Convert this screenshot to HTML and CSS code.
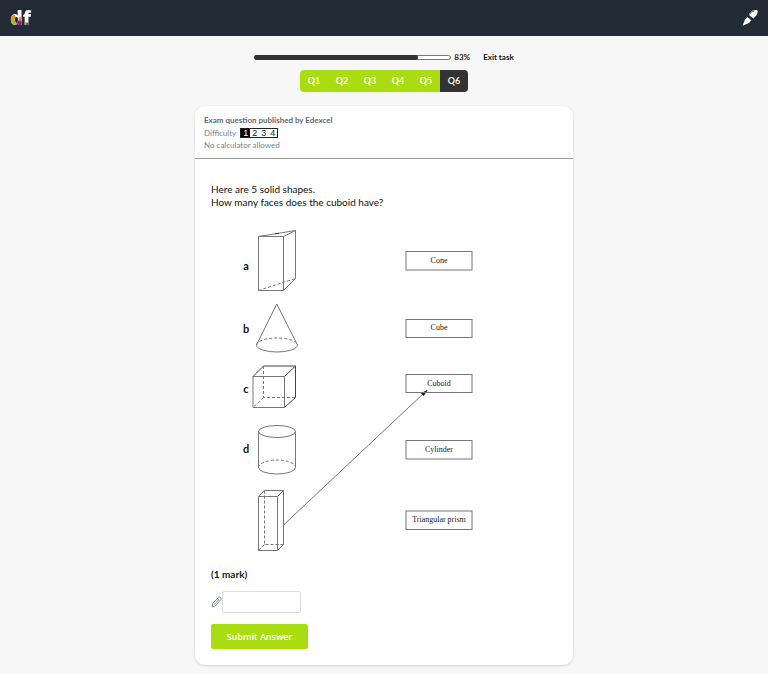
FILE: index.html
```
<!DOCTYPE html>
<html lang="en">

<head>
    <meta charset="UTF-8">
    <meta name="viewport" content="width=device-width, initial-scale=1.0">
    <title>Exam question</title>
    <link rel="stylesheet" href="styles.css">
</head>

<body>
    <header class="topBar">
        <a href="#" class="logo">df</a>
        <button class="penButton" aria-label="Drawing tools">
            <svg viewBox="0 0 16 16" width="16" height="16">
                <path d="M7.500 3.500l3-3 4-.5q1.300.3 1.200 1.500l-.7 3-3.500 4L7 5z" fill="#fff" />
                <path d="M5.500 7L9.200 10.200l-2.200 2.800-6.500 2.800L3 9.500z" fill="#fff" />
                <path d="M7.500 4.500l2.500-3 2.500-.3" fill="none" stroke="#222b36" stroke-width=".7" />
            </svg>
        </button>
    </header>

    <main>
        <div class="progressPart">
            <div class="progressBar" role="progressbar" aria-label="Task progress" aria-valuenow="83" aria-valuemin="0" aria-valuemax="100">
                <div class="progressFill" style="width: 83%"></div>
            </div>
            <span class="percent">83%</span>
            <a href="#" class="exitLink">Exit task</a>
        </div>

        <nav class="questionTabs">
            <button class="tab">Q1</button>
            <button class="tab">Q2</button>
            <button class="tab">Q3</button>
            <button class="tab">Q4</button>
            <button class="tab">Q5</button>
            <button class="tab active">Q6</button>
        </nav>

        <section class="card">
            <div class="cardInfo">
                <p class="publisher">Exam question published by Edexcel</p>
                <p class="difficulty">Difficulty
                    <span class="levels"><span class="level chosen">1</span><span class="level">2</span><span class="level">3</span><span class="level">4</span></span>
                </p>
                <p>No calculator allowed</p>
            </div>

            <form class="cardBody" onsubmit="return false">
                <p class="question">Here are 5 solid shapes.<br>How many faces does the cuboid have?</p>

                <svg class="diagram" viewBox="211 220 346 340">
                    <g class="letters">
                        <text x="246" y="270">a</text>
                        <text x="246" y="333">b</text>
                        <text x="246" y="393">c</text>
                        <text x="246" y="453">d</text>
                    </g>

                    <g class="lines">
                        <!-- triangular prism -->
                        <path d="M258.500 236.500H283.500V290.500H258.500zM258.500 236.500L295.500 230.500L283.500 236.500M295.500 230.500V278.500L283.500 290.500" />
                        <path class="dash" d="M258.500 290.500L295.500 278.500" />
                        <path class="solid" d="M275 233.500l4 0" />
                        <!-- cone -->
                        <path d="M256.500 345L276.800 304L297.500 345A20.500 7 0 0 1 256.500 345" />
                        <path class="dash" d="M256.500 345A20.500 7 0 0 1 297.500 345" />
                        <!-- cube -->
                        <path d="M253 376.500H284.500V407.500H253z" />
                        <path class="solid" d="M253 376.500L263.500 366H295.500L284.500 376.500M295.500 366V397.500L284.500 407.500" />
                        <path class="dash" d="M263.500 366V397.500H295.500M263.500 397.500L253 407.500" />
                        <!-- cylinder -->
                        <ellipse cx="277" cy="431.500" rx="18.500" ry="6" />
                        <path d="M258.500 431.500V467.500A18.500 6.500 0 0 0 295.500 467.500V431.500" />
                        <path class="dash" d="M258.500 467.500A18.500 7.500 0 0 1 295.500 467.500" />
                        <!-- cuboid -->
                        <path d="M258.500 496.500H277.500V550.500H258.500zM258.500 496.500L264.500 490.500H283.500L277.500 496.500M283.500 490.500V544.500L277.500 550.500" />
                        <path class="dash" d="M264.500 490.500V544.500H283.500M264.500 544.500L258.500 550.500" />
                        <!-- answer arrow -->
                        <path d="M283.500 525L424 393" />
                        <path class="arrowHead" d="M427 390.500L423.500 395.500L421.500 393.500z" />

                        <rect x="406" y="251.500" width="66" height="18.500" />
                        <rect x="406" y="319.500" width="66" height="18" />
                        <rect x="406" y="374.500" width="66" height="18" />
                        <rect x="406" y="440.500" width="66" height="18.500" />
                        <rect x="406" y="511" width="66" height="18.500" />
                    </g>

                    <g class="names">
                        <text x="439" y="263">Cone</text>
                        <text x="439" y="330">Cube</text>
                        <text x="439" y="386">Cuboid</text>
                        <text x="439" y="452">Cylinder</text>
                        <text x="439" y="522">Triangular prism</text>
                    </g>
                </svg>

                <label class="marks" for="answer">(1 mark)</label>
                <div class="answerRow">
                    <svg viewBox="0 0 11 12" width="11" height="12">
                        <path d="M1 11l.7-3.500L7.300 1.500q1-1 2.200.1t.2 2.200L4 10zM6.300 2.600L8.700 4.900M3 8.700L7.400 4" fill="none" stroke="#7d8790" stroke-width=".9" />
                    </svg>
                    <input type="text" id="answer" class="answerBox">
                </div>
                <button class="submitButton">Submit Answer</button>
            </form>
        </section>
    </main>
</body>

</html>
```
FILE: styles.css
```
* {
    margin: 0;
    padding: 0;
    box-sizing: border-box;
}

body {
    background-color: #f7f7f7;
    color: #222;
    font-family: "Lato", sans-serif;
}

button {
    border: none;
    cursor: pointer;
    font-family: inherit;
}

.topBar {
    display: flex;
    align-items: center;
    justify-content: space-between;
    height: 36px;
    padding: 0 10px;
    background-color: #222b36;
}

.logo {
    padding-right: 4px;
    font-family: "Open Sans", sans-serif;
    font-size: 20px;
    line-height: 24px;
    font-weight: 800;
    text-decoration: none;
    color: transparent;
    background:
        radial-gradient(circle at 3px 11px, #f08a24 2px, transparent 3px),
        radial-gradient(circle at 2px 16px, #8fc31f 3px, transparent 4px),
        radial-gradient(circle at 5px 19px, #f0a030 2px, transparent 3px),
        radial-gradient(circle at 9px 18px, #6b2c91 3px, transparent 4px),
        radial-gradient(circle at 11px 13px, #f08a24 2px, transparent 3px),
        radial-gradient(circle at 14px 18px, #8fc31f 2px, transparent 3px),
        radial-gradient(circle at 17px 19px, #8b2f8f 2px, transparent 3px),
        #fff;
    -webkit-background-clip: text;
    background-clip: text;
}

.penButton {
    display: flex;
    background: transparent;
}

.progressPart {
    display: flex;
    align-items: center;
    justify-content: center;
    margin-top: 15px;
    font-size: 8px;
    line-height: 12px;
    font-weight: bold;
}

.progressBar {
    width: 197px;
    height: 5px;
    border: 1px solid #777;
    border-radius: 3px;
    background-color: white;
}

.progressFill {
    height: 3px;
    border-radius: 2px;
    background-color: #333;
    box-shadow: 0 0 0 1px #333;
}

.percent {
    margin-left: 3px;
}

.exitLink {
    margin-left: 13px;
    color: #111;
    text-decoration: none;
}

.questionTabs {
    display: flex;
    width: fit-content;
    margin: 7px auto 14px;
    border-radius: 4px;
    overflow: hidden;
}

.tab {
    width: 28px;
    height: 22px;
    padding-bottom: 2px;
    background-color: #aadd11;
    color: white;
    font-size: 9px;
    font-weight: 600;
}

.tab.active {
    background-color: #333;
}

.card {
    width: calc(100% - 32px);
    max-width: 378px;
    margin: 0 auto 9px;
    border-radius: 10px;
    background-color: white;
    box-shadow: 0 1px 3px rgba(0, 0, 0, 0.15);
}

.cardInfo {
    padding: 8px 9px 7px;
    border-bottom: 1px solid #999;
    font-size: 8px;
    line-height: 12px;
    color: #7b8390;
}

.publisher {
    font-weight: bold;
    color: #5f6977;
}

.difficulty {
    display: flex;
    align-items: center;
    gap: 4px;
    height: 13px;
}

.levels {
    display: flex;
    border: 1px solid #222;
    font-family: "Liberation Sans", sans-serif;
    font-size: 9px;
    line-height: 8px;
    color: #222;
}

.level {
    width: 9px;
    text-align: center;
}

.level.chosen {
    background-color: black;
    color: white;
}

.cardBody {
    padding: 24px 16px 16px;
}

.question {
    font-size: 10px;
    line-height: 13px;
    color: #111;
}

.diagram {
    display: block;
    width: 100%;
    margin: 11px 0 8px;
}

.letters {
    font-size: 11px;
    font-weight: bold;
    text-anchor: middle;
    fill: #111;
}

.lines {
    fill: none;
    stroke: #777;
    stroke-width: 1px;
}

.solid {
    stroke: #444;
}

.dash {
    stroke-dasharray: 3 2;
}

.arrowHead {
    fill: #222;
    stroke: #222;
}

.names {
    font-family: "Liberation Serif", serif;
    font-size: 8px;
    text-anchor: middle;
    fill: #222;
}

.marks {
    display: block;
    font-size: 10px;
    line-height: 13px;
    font-weight: bold;
}

.answerRow {
    display: flex;
    align-items: center;
    margin: 10px 0 11px;
}

.answerBox {
    width: 79px;
    height: 22px;
    padding: 0 4px;
    border: 1px solid #ddd;
    border-radius: 2px;
    font-size: 10px;
}

.submitButton {
    display: block;
    height: 25px;
    width: 97px;
    border-radius: 2px;
    background-color: #aadd11;
    color: white;
    font-family: "Open Sans", sans-serif;
    font-size: 9px;
    font-weight: 600;
}
```
